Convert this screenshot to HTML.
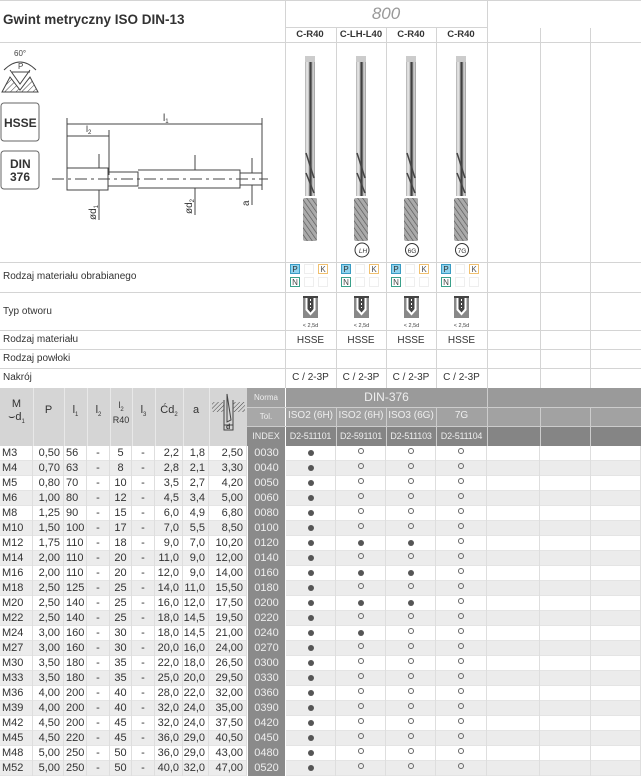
<!DOCTYPE html>
<html><head><meta charset="utf-8"><style>
*{margin:0;padding:0;box-sizing:border-box}
body{width:641px;height:780px;background:#fff;position:relative;overflow:hidden;font-family:"Liberation Sans",Arial,sans-serif;color:#333}
.a{position:absolute}
.hl{position:absolute;height:1px;background:#d4d4d4}
.vl{position:absolute;width:1px;background:#d4d4d4}
.lab{position:absolute;left:3px;font-size:10px;color:#333}
.ch{position:absolute;top:29px;font-size:9.5px;font-weight:bold;text-align:center;width:50px}
.row{position:absolute;left:0;width:641px;height:15px;display:flex;font-size:11px;line-height:15px;border-bottom:1px solid #e4e4e4}
.row>div{border-right:1px solid #dedede;height:15px;white-space:nowrap;overflow:visible}
.g{background:#ececec}
.l{text-align:left;padding-left:2px}.r{text-align:right;padding-right:3px}.c{text-align:center}
.ix{background:#8a8a8a;color:#eee;text-align:center;border-right:1px solid #fff!important;border-left:1px solid #fff}
.f,.o{display:inline-block;width:6px;height:6px;border-radius:50%;vertical-align:middle}
.f{background:#555}.o{border:1.3px solid #666;margin-top:-5px}
.hd{position:absolute;font-size:10px;color:#eee;text-align:center}
.mat{position:absolute;width:10px;height:10px;font-size:8px;line-height:9px;text-align:center;border:1px solid}
</style></head><body>
<div class="hl" style="top:0;left:0;width:641px"></div>
<div class="hl" style="top:42px;left:0;width:641px"></div>
<div class="hl" style="top:27px;left:285px;width:202px"></div>
<div class="hl" style="top:262px;left:0;width:641px"></div>
<div class="hl" style="top:292px;left:0;width:641px"></div>
<div class="hl" style="top:330px;left:0;width:641px"></div>
<div class="hl" style="top:349px;left:0;width:641px"></div>
<div class="hl" style="top:368px;left:0;width:641px"></div>
<div class="vl" style="left:285px;top:0;height:388px"></div>
<div class="vl" style="left:487px;top:0;height:388px"></div>
<div class="vl" style="left:336px;top:28px;height:360px"></div>
<div class="vl" style="left:386px;top:28px;height:360px"></div>
<div class="vl" style="left:436px;top:28px;height:360px"></div>
<div class="vl" style="left:540px;top:28px;height:360px"></div>
<div class="vl" style="left:590px;top:28px;height:360px"></div>

<div class="a" style="left:3px;top:12px;font-size:13.5px;font-weight:bold;color:#333">Gwint metryczny ISO DIN-13</div>
<div class="a" style="left:285px;top:4px;width:202px;text-align:center;font-size:17px;font-style:italic;color:#999">800</div>
<div class="ch" style="left:285px">C-R40</div>
<div class="ch" style="left:336px">C-LH-L40</div>
<div class="ch" style="left:386px">C-R40</div>
<div class="ch" style="left:436px">C-R40</div>

<svg class="a" style="left:0;top:43px" width="285" height="218" viewBox="0 43 285 218">
<defs><pattern id="h" width="4" height="4" patternUnits="userSpaceOnUse" patternTransform="rotate(45)"><line x1="0" y1="0" x2="0" y2="4" stroke="#444"/></pattern></defs>
<g fill="none" stroke="#444" stroke-width="1">
<path d="M4 70 Q20 54 36 70"/><text x="14" y="56" font-size="8" fill="#444" stroke="none" font-family="Liberation Sans">60°</text>
<path d="M10 70 L20 84 L30 70"/><path d="M12 72 H30"/><text x="18" y="69" font-size="8" fill="#444" stroke="none" font-family="Liberation Sans">P</text>
<path d="M2 92 L10 77 L20 90 L30 77 L38 92 Z" fill="url(#h)"/>
<rect x="1" y="103" width="38" height="38" rx="3" stroke="#666"/>
<rect x="1" y="151" width="38" height="38" rx="3" stroke="#666"/>
<path d="M67 118 V190 M262 118 V190 M67 124 H262 M67 136 H109 M109 130 V175"/>
<path d="M52 179 H268" stroke-dasharray="12 4 3 4"/>
<path d="M67 168 H108 V190 H67 Z M108 172 H138 V186 H108 M138 170 H240 V188 H138 M240 173 H262 V185 H240"/>
<path d="M99 154 V168 M99 190 V220 M195 155 V170 M195 188 V215 M252 158 V173 M252 185 V205"/>
</g>
<g font-family="Liberation Sans" fill="#333">
<text x="4" y="127" font-size="12" font-weight="bold">HSSE</text>
<text x="10" y="168" font-size="12" font-weight="bold">DIN</text>
<text x="10" y="181" font-size="12" font-weight="bold">376</text>
<text x="163" y="121" font-size="10">l<tspan font-size="6" dy="2">1</tspan></text><text x="86" y="132" font-size="9">l<tspan font-size="6" dy="2">2</tspan></text>
<text transform="translate(96 220) rotate(-90)" font-size="10">ød<tspan font-size="6" dy="2">1</tspan></text>
<text transform="translate(192 214) rotate(-90)" font-size="10">ød<tspan font-size="6" dy="2">2</tspan></text>
<text transform="translate(249 206) rotate(-90)" font-size="10">a</text>
</g></svg>

<svg class="a" style="left:285px;top:43px" width="202" height="218">
<defs><linearGradient id="t" x1="0" x2="1"><stop offset="0" stop-color="#aaa"/><stop offset=".2" stop-color="#eee"/><stop offset=".4" stop-color="#bbb"/><stop offset=".5" stop-color="#333"/><stop offset=".62" stop-color="#555"/><stop offset=".8" stop-color="#ddd"/><stop offset="1" stop-color="#999"/></linearGradient>
<pattern id="fl" width="4" height="4" patternUnits="userSpaceOnUse" patternTransform="rotate(-35)"><line x1="0" y1="0" x2="0" y2="4" stroke="#555" stroke-width="1.3"/></pattern>
<g id="tap"><rect x="-5" y="13" width="10" height="140" fill="url(#t)"/><path d="M-5 13 h10 v6 h-10z" fill="#ccc"/><rect x="-7" y="155" width="14" height="43" rx="2" fill="#aaa"/><rect x="-7" y="155" width="14" height="43" rx="2" fill="url(#fl)"/><path d="M-4 110 L4 135 M-4 130 L4 150" stroke="#444" stroke-width="1.5"/></g></defs>
<use href="#tap" x="25"/><use href="#tap" x="76"/><use href="#tap" x="126"/><use href="#tap" x="176"/>
<g fill="none" stroke="#333" stroke-width="1"><circle cx="77" cy="207" r="7"/><circle cx="127" cy="207" r="6.5"/><circle cx="177" cy="207" r="6.5"/></g>
<g font-family="Liberation Sans" font-size="6.5" fill="#333" text-anchor="middle"><text x="78" y="210" font-style="italic">LH</text><text x="127" y="210">6G</text><text x="177" y="210">7G</text></g>
</svg>

<div class="a" style="left:285px;top:264px">
<div class="mat" style="left:5px;top:0;background:#8fd3ee;border-color:#3a9cc4">P</div>
<div class="mat" style="left:19px;top:0;border-color:#eee"></div>
<div class="mat" style="left:33px;top:0;border-color:#f0c070;color:#555">K</div>
<div class="mat" style="left:5px;top:13px;border-color:#3aa08a;color:#444">N</div>
<div class="mat" style="left:19px;top:13px;border-color:#eee"></div>
<div class="mat" style="left:33px;top:13px;border-color:#eee"></div>
</div>
<div class="a" style="left:336px;top:264px">
<div class="mat" style="left:5px;top:0;background:#8fd3ee;border-color:#3a9cc4">P</div>
<div class="mat" style="left:19px;top:0;border-color:#eee"></div>
<div class="mat" style="left:33px;top:0;border-color:#f0c070;color:#555">K</div>
<div class="mat" style="left:5px;top:13px;border-color:#3aa08a;color:#444">N</div>
<div class="mat" style="left:19px;top:13px;border-color:#eee"></div>
<div class="mat" style="left:33px;top:13px;border-color:#eee"></div>
</div>
<div class="a" style="left:386px;top:264px">
<div class="mat" style="left:5px;top:0;background:#8fd3ee;border-color:#3a9cc4">P</div>
<div class="mat" style="left:19px;top:0;border-color:#eee"></div>
<div class="mat" style="left:33px;top:0;border-color:#f0c070;color:#555">K</div>
<div class="mat" style="left:5px;top:13px;border-color:#3aa08a;color:#444">N</div>
<div class="mat" style="left:19px;top:13px;border-color:#eee"></div>
<div class="mat" style="left:33px;top:13px;border-color:#eee"></div>
</div>
<div class="a" style="left:436px;top:264px">
<div class="mat" style="left:5px;top:0;background:#8fd3ee;border-color:#3a9cc4">P</div>
<div class="mat" style="left:19px;top:0;border-color:#eee"></div>
<div class="mat" style="left:33px;top:0;border-color:#f0c070;color:#555">K</div>
<div class="mat" style="left:5px;top:13px;border-color:#3aa08a;color:#444">N</div>
<div class="mat" style="left:19px;top:13px;border-color:#eee"></div>
<div class="mat" style="left:33px;top:13px;border-color:#eee"></div>
</div>
<svg class="a" style="left:285px;top:294px" width="202" height="36">
<g id="hi"><rect x="18" y="2" width="15" height="22" fill="#888"/><rect x="18" y="2" width="15" height="2" fill="#444"/><path d="M20.5 4 V16 L25.5 21.5 L30.5 16 V4" fill="#fff"/><path d="M22.5 4 V15 L25.5 18.5 L28.5 15 V4 Z" fill="#444"/><path d="M25.5 5 V14" stroke="#fff" stroke-dasharray="2 2"/>
<text x="25.5" y="33" font-size="5.5" text-anchor="middle" font-family="Liberation Sans" fill="#444">&lt; 2,5d</text></g>
<use href="#hi" x="51"/><use href="#hi" x="101"/><use href="#hi" x="151"/>
</svg>

<div class="lab" style="top:271px">Rodzaj materiału obrabianego</div>
<div class="lab" style="top:306px">Typ otworu</div>
<div class="lab" style="top:334px">Rodzaj materiału</div>
<div class="lab" style="top:353px">Rodzaj powłoki</div>
<div class="lab" style="top:372px">Nakrój</div>
<div class="a" style="left:285px;top:335px;width:202px;display:flex;font-size:10px"><div style="width:51px;text-align:center">HSSE</div><div style="width:50px;text-align:center">HSSE</div><div style="width:50px;text-align:center">HSSE</div><div style="width:51px;text-align:center">HSSE</div></div>
<div class="a" style="left:285px;top:372px;width:202px;display:flex;font-size:10px"><div style="width:51px;text-align:center">C / 2-3P</div><div style="width:50px;text-align:center">C / 2-3P</div><div style="width:50px;text-align:center">C / 2-3P</div><div style="width:51px;text-align:center">C / 2-3P</div></div>

<div class="a" style="left:0;top:388px;width:247px;height:58px;background:#d5d5d5"></div>
<div class="a" style="left:247px;top:388px;width:38px;height:19px;background:#a0a0a0"></div>
<div class="a" style="left:247px;top:407px;width:38px;height:19px;background:#a8a8a8"></div>
<div class="a" style="left:247px;top:426px;width:38px;height:20px;background:#8a8a8a"></div>
<div class="a" style="left:286px;top:388px;width:355px;height:19px;background:#9a9a9a"></div>
<div class="a" style="left:286px;top:407px;width:355px;height:19px;background:#a2a2a2"></div>
<div class="a" style="left:286px;top:426px;width:355px;height:20px;background:#858585"></div>
<div class="a" style="left:0;top:388px;width:641px;height:58px">
<div class="vl" style="left:33px;top:0;height:58px;background:#e8e8e8"></div><div class="vl" style="left:64px;top:0;height:58px;background:#e8e8e8"></div><div class="vl" style="left:87px;top:0;height:58px;background:#e8e8e8"></div><div class="vl" style="left:110px;top:0;height:58px;background:#e8e8e8"></div><div class="vl" style="left:132px;top:0;height:58px;background:#e8e8e8"></div><div class="vl" style="left:155px;top:0;height:58px;background:#e8e8e8"></div><div class="vl" style="left:183px;top:0;height:58px;background:#e8e8e8"></div><div class="vl" style="left:209px;top:0;height:58px;background:#e8e8e8"></div>
<div class="vl" style="left:336px;top:19px;height:39px;background:#ccc"></div><div class="vl" style="left:386px;top:19px;height:39px;background:#ccc"></div><div class="vl" style="left:436px;top:19px;height:39px;background:#ccc"></div><div class="vl" style="left:487px;top:0;height:58px;background:#ccc"></div><div class="vl" style="left:540px;top:19px;height:39px;background:#ccc"></div><div class="vl" style="left:590px;top:19px;height:39px;background:#ccc"></div>
<div class="hl" style="left:247px;top:19px;width:394px;background:#ccc"></div><div class="hl" style="left:247px;top:38px;width:394px;background:#ccc"></div>
</div>
<div class="a" style="left:0;top:398px;width:33px;text-align:center;font-size:11px;line-height:13px">M<br>⌣d<sub style="font-size:6px">1</sub></div>
<div class="a" style="left:33px;top:404px;width:31px;text-align:center;font-size:11px">P</div>
<div class="a" style="left:64px;top:404px;width:23px;text-align:center;font-size:11px">l<sub style="font-size:6px">1</sub></div>
<div class="a" style="left:87px;top:404px;width:23px;text-align:center;font-size:11px">l<sub style="font-size:6px">2</sub></div>
<div class="a" style="left:110px;top:400px;width:22px;text-align:center;font-size:9px;line-height:10px">l<sub style="font-size:6px">2</sub><br>R40</div>
<div class="a" style="left:132px;top:404px;width:23px;text-align:center;font-size:11px">l<sub style="font-size:6px">3</sub></div>
<div class="a" style="left:155px;top:404px;width:28px;text-align:center;font-size:11px">Ćd<sub style="font-size:6px">2</sub></div>
<div class="a" style="left:183px;top:404px;width:26px;text-align:center;font-size:11px">a</div>
<svg class="a" style="left:209px;top:390px" width="38" height="44"><defs><pattern id="h2" width="3" height="3" patternUnits="userSpaceOnUse" patternTransform="rotate(45)"><line x1="0" y1="0" x2="0" y2="3" stroke="#444"/></pattern></defs><rect x="3" y="12" width="12" height="10" fill="url(#h2)"/><rect x="24" y="12" width="12" height="10" fill="url(#h2)"/><path d="M15 10 V40 H24 V10 M15 35 H24 M18 4 L22 30 L18 32 Z" fill="none" stroke="#444"/><text x="17" y="39" font-size="7" font-family="Liberation Sans" font-weight="bold" fill="#333">d</text></svg>
<div class="hd" style="left:247px;top:393px;width:38px;font-size:8px">Norma</div>
<div class="hd" style="left:247px;top:412px;width:38px;font-size:8px">Tol.</div>
<div class="hd" style="left:247px;top:431px;width:38px;font-size:9px">INDEX</div>
<div class="hd" style="left:286px;top:390px;width:201px;font-size:12px">DIN-376</div>
<div class="a" style="left:285px;top:410px;display:flex;font-size:10px;color:#eee"><div style="width:51px;text-align:center">ISO2 (6H)</div><div style="width:50px;text-align:center">ISO2 (6H)</div><div style="width:50px;text-align:center">ISO3 (6G)</div><div style="width:51px;text-align:center">7G</div></div>
<div class="a" style="left:285px;top:431px;display:flex;font-size:9px;letter-spacing:-0.2px;color:#eee"><div style="width:51px;text-align:center">D2-511101</div><div style="width:50px;text-align:center">D2-591101</div><div style="width:50px;text-align:center">D2-511103</div><div style="width:51px;text-align:center">D2-511104</div></div>

<div class="row" style="top:446px"><div class="l" style="width:33px">M3</div><div class="r" style="width:31px">0,50</div><div class="l" style="width:23px">56</div><div class="c" style="width:23px">-</div><div class="c" style="width:22px">5</div><div class="c" style="width:23px">-</div><div class="r" style="width:28px">2,2</div><div class="r" style="width:26px">1,8</div><div class="r" style="width:38px">2,50</div><div class="ix" style="width:39px">0030</div><div class="c" style="width:50px"><i class="f"></i></div><div class="c" style="width:50px"><i class="o"></i></div><div class="c" style="width:50px"><i class="o"></i></div><div class="c" style="width:51px"><i class="o"></i></div><div style="width:53px"></div><div style="width:51px"></div><div style="width:50px"></div></div>
<div class="row g" style="top:461px"><div class="l" style="width:33px">M4</div><div class="r" style="width:31px">0,70</div><div class="l" style="width:23px">63</div><div class="c" style="width:23px">-</div><div class="c" style="width:22px">8</div><div class="c" style="width:23px">-</div><div class="r" style="width:28px">2,8</div><div class="r" style="width:26px">2,1</div><div class="r" style="width:38px">3,30</div><div class="ix" style="width:39px">0040</div><div class="c" style="width:50px"><i class="f"></i></div><div class="c" style="width:50px"><i class="o"></i></div><div class="c" style="width:50px"><i class="o"></i></div><div class="c" style="width:51px"><i class="o"></i></div><div style="width:53px"></div><div style="width:51px"></div><div style="width:50px"></div></div>
<div class="row" style="top:476px"><div class="l" style="width:33px">M5</div><div class="r" style="width:31px">0,80</div><div class="l" style="width:23px">70</div><div class="c" style="width:23px">-</div><div class="c" style="width:22px">10</div><div class="c" style="width:23px">-</div><div class="r" style="width:28px">3,5</div><div class="r" style="width:26px">2,7</div><div class="r" style="width:38px">4,20</div><div class="ix" style="width:39px">0050</div><div class="c" style="width:50px"><i class="f"></i></div><div class="c" style="width:50px"><i class="o"></i></div><div class="c" style="width:50px"><i class="o"></i></div><div class="c" style="width:51px"><i class="o"></i></div><div style="width:53px"></div><div style="width:51px"></div><div style="width:50px"></div></div>
<div class="row g" style="top:491px"><div class="l" style="width:33px">M6</div><div class="r" style="width:31px">1,00</div><div class="l" style="width:23px">80</div><div class="c" style="width:23px">-</div><div class="c" style="width:22px">12</div><div class="c" style="width:23px">-</div><div class="r" style="width:28px">4,5</div><div class="r" style="width:26px">3,4</div><div class="r" style="width:38px">5,00</div><div class="ix" style="width:39px">0060</div><div class="c" style="width:50px"><i class="f"></i></div><div class="c" style="width:50px"><i class="o"></i></div><div class="c" style="width:50px"><i class="o"></i></div><div class="c" style="width:51px"><i class="o"></i></div><div style="width:53px"></div><div style="width:51px"></div><div style="width:50px"></div></div>
<div class="row" style="top:506px"><div class="l" style="width:33px">M8</div><div class="r" style="width:31px">1,25</div><div class="l" style="width:23px">90</div><div class="c" style="width:23px">-</div><div class="c" style="width:22px">15</div><div class="c" style="width:23px">-</div><div class="r" style="width:28px">6,0</div><div class="r" style="width:26px">4,9</div><div class="r" style="width:38px">6,80</div><div class="ix" style="width:39px">0080</div><div class="c" style="width:50px"><i class="f"></i></div><div class="c" style="width:50px"><i class="o"></i></div><div class="c" style="width:50px"><i class="o"></i></div><div class="c" style="width:51px"><i class="o"></i></div><div style="width:53px"></div><div style="width:51px"></div><div style="width:50px"></div></div>
<div class="row g" style="top:521px"><div class="l" style="width:33px">M10</div><div class="r" style="width:31px">1,50</div><div class="l" style="width:23px">100</div><div class="c" style="width:23px">-</div><div class="c" style="width:22px">17</div><div class="c" style="width:23px">-</div><div class="r" style="width:28px">7,0</div><div class="r" style="width:26px">5,5</div><div class="r" style="width:38px">8,50</div><div class="ix" style="width:39px">0100</div><div class="c" style="width:50px"><i class="f"></i></div><div class="c" style="width:50px"><i class="o"></i></div><div class="c" style="width:50px"><i class="o"></i></div><div class="c" style="width:51px"><i class="o"></i></div><div style="width:53px"></div><div style="width:51px"></div><div style="width:50px"></div></div>
<div class="row" style="top:536px"><div class="l" style="width:33px">M12</div><div class="r" style="width:31px">1,75</div><div class="l" style="width:23px">110</div><div class="c" style="width:23px">-</div><div class="c" style="width:22px">18</div><div class="c" style="width:23px">-</div><div class="r" style="width:28px">9,0</div><div class="r" style="width:26px">7,0</div><div class="r" style="width:38px">10,20</div><div class="ix" style="width:39px">0120</div><div class="c" style="width:50px"><i class="f"></i></div><div class="c" style="width:50px"><i class="f"></i></div><div class="c" style="width:50px"><i class="f"></i></div><div class="c" style="width:51px"><i class="o"></i></div><div style="width:53px"></div><div style="width:51px"></div><div style="width:50px"></div></div>
<div class="row g" style="top:551px"><div class="l" style="width:33px">M14</div><div class="r" style="width:31px">2,00</div><div class="l" style="width:23px">110</div><div class="c" style="width:23px">-</div><div class="c" style="width:22px">20</div><div class="c" style="width:23px">-</div><div class="r" style="width:28px">11,0</div><div class="r" style="width:26px">9,0</div><div class="r" style="width:38px">12,00</div><div class="ix" style="width:39px">0140</div><div class="c" style="width:50px"><i class="f"></i></div><div class="c" style="width:50px"><i class="o"></i></div><div class="c" style="width:50px"><i class="o"></i></div><div class="c" style="width:51px"><i class="o"></i></div><div style="width:53px"></div><div style="width:51px"></div><div style="width:50px"></div></div>
<div class="row" style="top:566px"><div class="l" style="width:33px">M16</div><div class="r" style="width:31px">2,00</div><div class="l" style="width:23px">110</div><div class="c" style="width:23px">-</div><div class="c" style="width:22px">20</div><div class="c" style="width:23px">-</div><div class="r" style="width:28px">12,0</div><div class="r" style="width:26px">9,0</div><div class="r" style="width:38px">14,00</div><div class="ix" style="width:39px">0160</div><div class="c" style="width:50px"><i class="f"></i></div><div class="c" style="width:50px"><i class="f"></i></div><div class="c" style="width:50px"><i class="f"></i></div><div class="c" style="width:51px"><i class="o"></i></div><div style="width:53px"></div><div style="width:51px"></div><div style="width:50px"></div></div>
<div class="row g" style="top:581px"><div class="l" style="width:33px">M18</div><div class="r" style="width:31px">2,50</div><div class="l" style="width:23px">125</div><div class="c" style="width:23px">-</div><div class="c" style="width:22px">25</div><div class="c" style="width:23px">-</div><div class="r" style="width:28px">14,0</div><div class="r" style="width:26px">11,0</div><div class="r" style="width:38px">15,50</div><div class="ix" style="width:39px">0180</div><div class="c" style="width:50px"><i class="f"></i></div><div class="c" style="width:50px"><i class="o"></i></div><div class="c" style="width:50px"><i class="o"></i></div><div class="c" style="width:51px"><i class="o"></i></div><div style="width:53px"></div><div style="width:51px"></div><div style="width:50px"></div></div>
<div class="row" style="top:596px"><div class="l" style="width:33px">M20</div><div class="r" style="width:31px">2,50</div><div class="l" style="width:23px">140</div><div class="c" style="width:23px">-</div><div class="c" style="width:22px">25</div><div class="c" style="width:23px">-</div><div class="r" style="width:28px">16,0</div><div class="r" style="width:26px">12,0</div><div class="r" style="width:38px">17,50</div><div class="ix" style="width:39px">0200</div><div class="c" style="width:50px"><i class="f"></i></div><div class="c" style="width:50px"><i class="f"></i></div><div class="c" style="width:50px"><i class="f"></i></div><div class="c" style="width:51px"><i class="o"></i></div><div style="width:53px"></div><div style="width:51px"></div><div style="width:50px"></div></div>
<div class="row g" style="top:611px"><div class="l" style="width:33px">M22</div><div class="r" style="width:31px">2,50</div><div class="l" style="width:23px">140</div><div class="c" style="width:23px">-</div><div class="c" style="width:22px">25</div><div class="c" style="width:23px">-</div><div class="r" style="width:28px">18,0</div><div class="r" style="width:26px">14,5</div><div class="r" style="width:38px">19,50</div><div class="ix" style="width:39px">0220</div><div class="c" style="width:50px"><i class="f"></i></div><div class="c" style="width:50px"><i class="o"></i></div><div class="c" style="width:50px"><i class="o"></i></div><div class="c" style="width:51px"><i class="o"></i></div><div style="width:53px"></div><div style="width:51px"></div><div style="width:50px"></div></div>
<div class="row" style="top:626px"><div class="l" style="width:33px">M24</div><div class="r" style="width:31px">3,00</div><div class="l" style="width:23px">160</div><div class="c" style="width:23px">-</div><div class="c" style="width:22px">30</div><div class="c" style="width:23px">-</div><div class="r" style="width:28px">18,0</div><div class="r" style="width:26px">14,5</div><div class="r" style="width:38px">21,00</div><div class="ix" style="width:39px">0240</div><div class="c" style="width:50px"><i class="f"></i></div><div class="c" style="width:50px"><i class="f"></i></div><div class="c" style="width:50px"><i class="o"></i></div><div class="c" style="width:51px"><i class="o"></i></div><div style="width:53px"></div><div style="width:51px"></div><div style="width:50px"></div></div>
<div class="row g" style="top:641px"><div class="l" style="width:33px">M27</div><div class="r" style="width:31px">3,00</div><div class="l" style="width:23px">160</div><div class="c" style="width:23px">-</div><div class="c" style="width:22px">30</div><div class="c" style="width:23px">-</div><div class="r" style="width:28px">20,0</div><div class="r" style="width:26px">16,0</div><div class="r" style="width:38px">24,00</div><div class="ix" style="width:39px">0270</div><div class="c" style="width:50px"><i class="f"></i></div><div class="c" style="width:50px"><i class="o"></i></div><div class="c" style="width:50px"><i class="o"></i></div><div class="c" style="width:51px"><i class="o"></i></div><div style="width:53px"></div><div style="width:51px"></div><div style="width:50px"></div></div>
<div class="row" style="top:656px"><div class="l" style="width:33px">M30</div><div class="r" style="width:31px">3,50</div><div class="l" style="width:23px">180</div><div class="c" style="width:23px">-</div><div class="c" style="width:22px">35</div><div class="c" style="width:23px">-</div><div class="r" style="width:28px">22,0</div><div class="r" style="width:26px">18,0</div><div class="r" style="width:38px">26,50</div><div class="ix" style="width:39px">0300</div><div class="c" style="width:50px"><i class="f"></i></div><div class="c" style="width:50px"><i class="o"></i></div><div class="c" style="width:50px"><i class="o"></i></div><div class="c" style="width:51px"><i class="o"></i></div><div style="width:53px"></div><div style="width:51px"></div><div style="width:50px"></div></div>
<div class="row g" style="top:671px"><div class="l" style="width:33px">M33</div><div class="r" style="width:31px">3,50</div><div class="l" style="width:23px">180</div><div class="c" style="width:23px">-</div><div class="c" style="width:22px">35</div><div class="c" style="width:23px">-</div><div class="r" style="width:28px">25,0</div><div class="r" style="width:26px">20,0</div><div class="r" style="width:38px">29,50</div><div class="ix" style="width:39px">0330</div><div class="c" style="width:50px"><i class="f"></i></div><div class="c" style="width:50px"><i class="o"></i></div><div class="c" style="width:50px"><i class="o"></i></div><div class="c" style="width:51px"><i class="o"></i></div><div style="width:53px"></div><div style="width:51px"></div><div style="width:50px"></div></div>
<div class="row" style="top:686px"><div class="l" style="width:33px">M36</div><div class="r" style="width:31px">4,00</div><div class="l" style="width:23px">200</div><div class="c" style="width:23px">-</div><div class="c" style="width:22px">40</div><div class="c" style="width:23px">-</div><div class="r" style="width:28px">28,0</div><div class="r" style="width:26px">22,0</div><div class="r" style="width:38px">32,00</div><div class="ix" style="width:39px">0360</div><div class="c" style="width:50px"><i class="f"></i></div><div class="c" style="width:50px"><i class="o"></i></div><div class="c" style="width:50px"><i class="o"></i></div><div class="c" style="width:51px"><i class="o"></i></div><div style="width:53px"></div><div style="width:51px"></div><div style="width:50px"></div></div>
<div class="row g" style="top:701px"><div class="l" style="width:33px">M39</div><div class="r" style="width:31px">4,00</div><div class="l" style="width:23px">200</div><div class="c" style="width:23px">-</div><div class="c" style="width:22px">40</div><div class="c" style="width:23px">-</div><div class="r" style="width:28px">32,0</div><div class="r" style="width:26px">24,0</div><div class="r" style="width:38px">35,00</div><div class="ix" style="width:39px">0390</div><div class="c" style="width:50px"><i class="f"></i></div><div class="c" style="width:50px"><i class="o"></i></div><div class="c" style="width:50px"><i class="o"></i></div><div class="c" style="width:51px"><i class="o"></i></div><div style="width:53px"></div><div style="width:51px"></div><div style="width:50px"></div></div>
<div class="row" style="top:716px"><div class="l" style="width:33px">M42</div><div class="r" style="width:31px">4,50</div><div class="l" style="width:23px">200</div><div class="c" style="width:23px">-</div><div class="c" style="width:22px">45</div><div class="c" style="width:23px">-</div><div class="r" style="width:28px">32,0</div><div class="r" style="width:26px">24,0</div><div class="r" style="width:38px">37,50</div><div class="ix" style="width:39px">0420</div><div class="c" style="width:50px"><i class="f"></i></div><div class="c" style="width:50px"><i class="o"></i></div><div class="c" style="width:50px"><i class="o"></i></div><div class="c" style="width:51px"><i class="o"></i></div><div style="width:53px"></div><div style="width:51px"></div><div style="width:50px"></div></div>
<div class="row g" style="top:731px"><div class="l" style="width:33px">M45</div><div class="r" style="width:31px">4,50</div><div class="l" style="width:23px">220</div><div class="c" style="width:23px">-</div><div class="c" style="width:22px">45</div><div class="c" style="width:23px">-</div><div class="r" style="width:28px">36,0</div><div class="r" style="width:26px">29,0</div><div class="r" style="width:38px">40,50</div><div class="ix" style="width:39px">0450</div><div class="c" style="width:50px"><i class="f"></i></div><div class="c" style="width:50px"><i class="o"></i></div><div class="c" style="width:50px"><i class="o"></i></div><div class="c" style="width:51px"><i class="o"></i></div><div style="width:53px"></div><div style="width:51px"></div><div style="width:50px"></div></div>
<div class="row" style="top:746px"><div class="l" style="width:33px">M48</div><div class="r" style="width:31px">5,00</div><div class="l" style="width:23px">250</div><div class="c" style="width:23px">-</div><div class="c" style="width:22px">50</div><div class="c" style="width:23px">-</div><div class="r" style="width:28px">36,0</div><div class="r" style="width:26px">29,0</div><div class="r" style="width:38px">43,00</div><div class="ix" style="width:39px">0480</div><div class="c" style="width:50px"><i class="f"></i></div><div class="c" style="width:50px"><i class="o"></i></div><div class="c" style="width:50px"><i class="o"></i></div><div class="c" style="width:51px"><i class="o"></i></div><div style="width:53px"></div><div style="width:51px"></div><div style="width:50px"></div></div>
<div class="row g" style="top:761px"><div class="l" style="width:33px">M52</div><div class="r" style="width:31px">5,00</div><div class="l" style="width:23px">250</div><div class="c" style="width:23px">-</div><div class="c" style="width:22px">50</div><div class="c" style="width:23px">-</div><div class="r" style="width:28px">40,0</div><div class="r" style="width:26px">32,0</div><div class="r" style="width:38px">47,00</div><div class="ix" style="width:39px">0520</div><div class="c" style="width:50px"><i class="f"></i></div><div class="c" style="width:50px"><i class="o"></i></div><div class="c" style="width:50px"><i class="o"></i></div><div class="c" style="width:51px"><i class="o"></i></div><div style="width:53px"></div><div style="width:51px"></div><div style="width:50px"></div></div>
</body></html>
